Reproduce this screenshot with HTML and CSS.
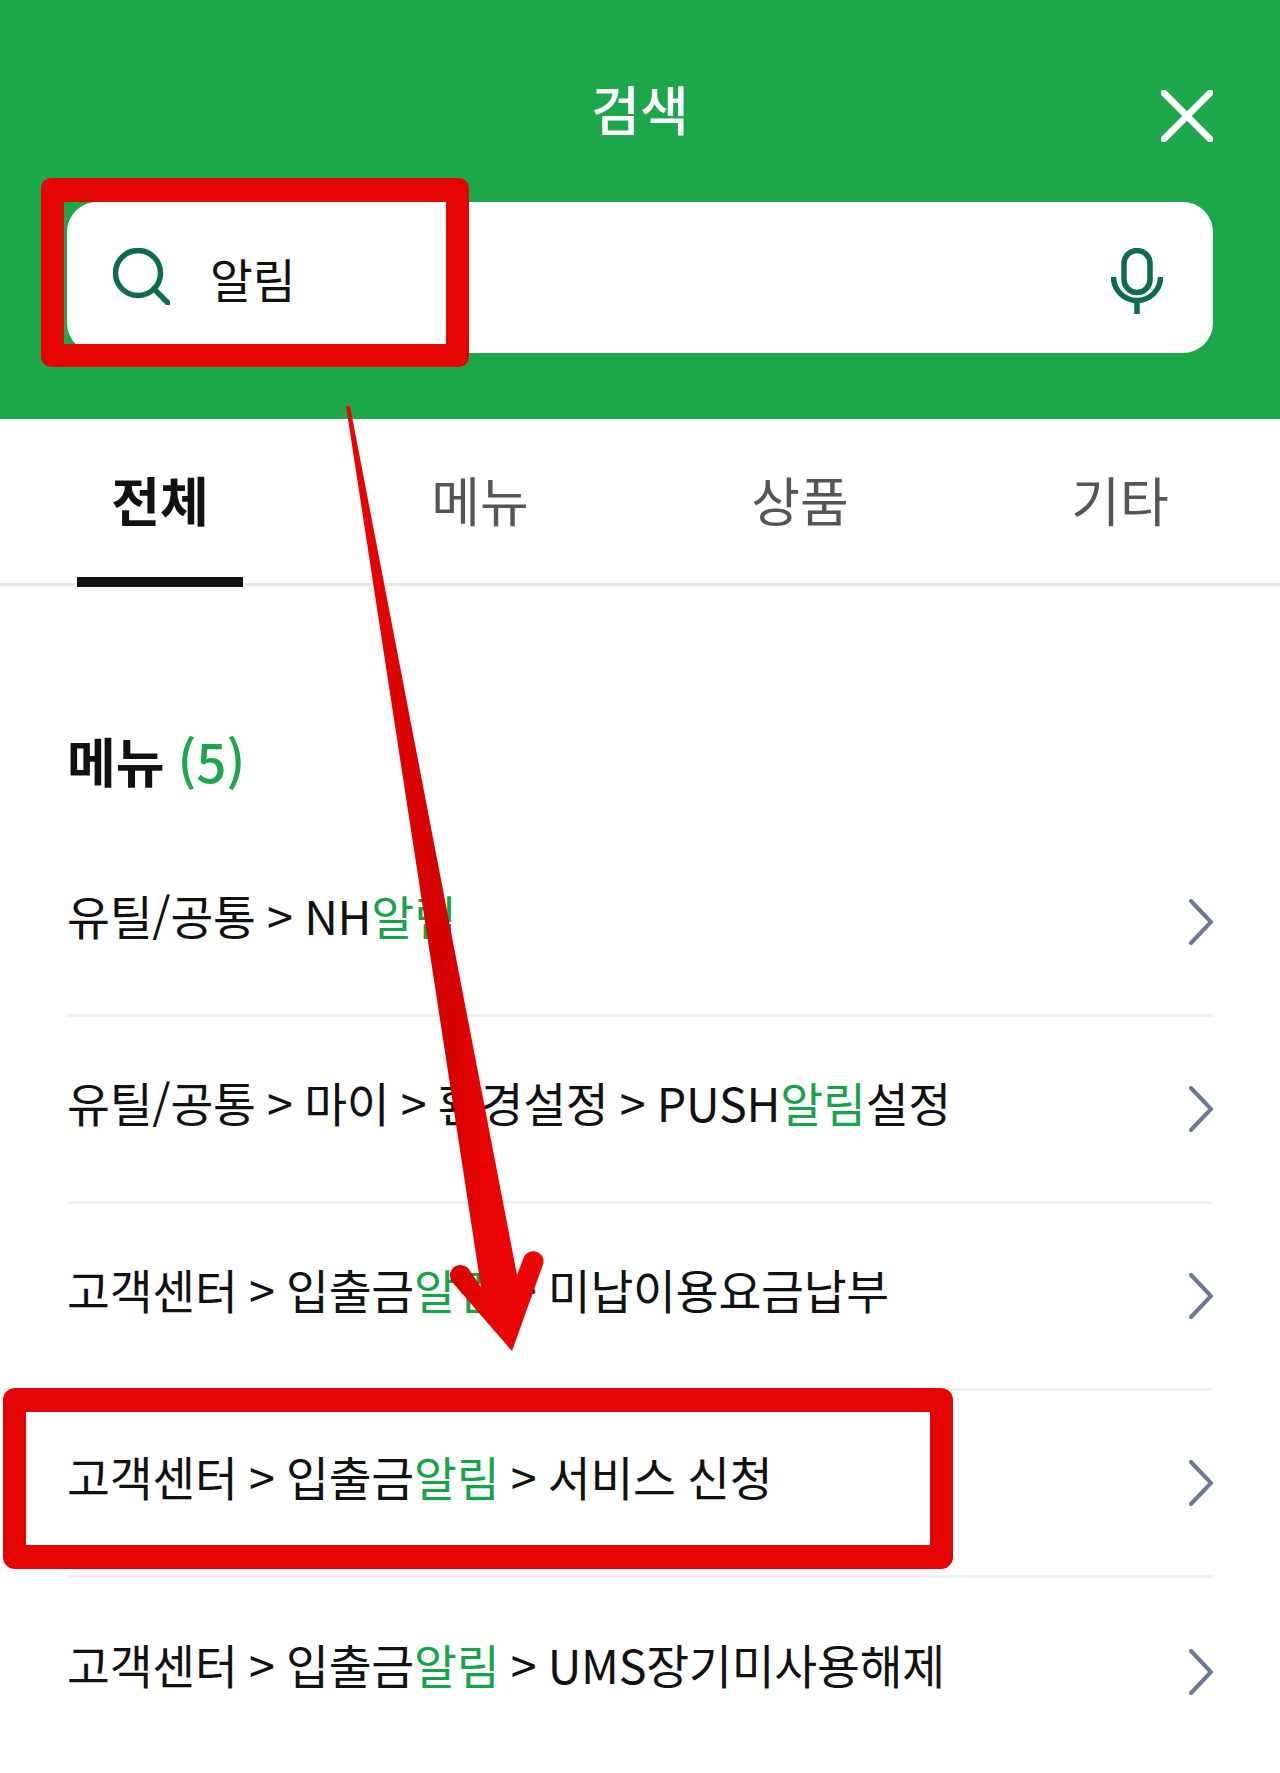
FILE: index.html
```html
<!DOCTYPE html>
<html lang="ko">
<head>
  <meta charset="UTF-8" />
  <meta name="viewport" content="width=device-width, initial-scale=1.0"/>
  <title>검색</title>
  <link rel="stylesheet" href="styles.css">
</head>
<body>
  <div class="page">
    <header class="topbar">
      <div class="title-row">
        <h1 class="title">검색</h1>
        <svg class="close" viewBox="0 0 54 54"><path d="M3 3 L51 51 M51 3 L3 51"/></svg>
      </div>
      <div class="search">
        <svg class="search-icon" viewBox="0 0 57 57"><circle cx="25" cy="25" r="22.5"/><path d="M41 41 L55 55"/></svg>
        <span class="search-text">알림</span>
        <svg class="mic-icon" viewBox="0 0 52 66"><rect x="13" y="2.5" width="26" height="42" rx="13"/><path d="M2.5 29 A23.5 23.5 0 0 0 49.5 29 M26 52 V66"/></svg>
      </div>
    </header>

    <nav class="tabs">
      <div class="tab active"><span>전체</span></div>
      <div class="tab"><span>메뉴</span></div>
      <div class="tab"><span>상품</span></div>
      <div class="tab"><span>기타</span></div>
    </nav>

    <h2 class="section">메뉴 <em>(5)</em></h2>

    <ul class="list">
      <li class="row"><span>유틸/공통 &gt; NH<b>알림</b></span><svg class="chevron" viewBox="0 0 24 46"><path d="M2 2 L22 23 L2 44"/></svg></li>
      <li class="row"><span>유틸/공통 &gt; 마이 &gt; 환경설정 &gt; PUSH<b>알림</b>설정</span><svg class="chevron" viewBox="0 0 24 46"><path d="M2 2 L22 23 L2 44"/></svg></li>
      <li class="row"><span>고객센터 &gt; 입출금<b>알림</b> &gt; 미납이용요금납부</span><svg class="chevron" viewBox="0 0 24 46"><path d="M2 2 L22 23 L2 44"/></svg></li>
      <li class="row"><span>고객센터 &gt; 입출금<b>알림</b> &gt; 서비스 신청</span><svg class="chevron" viewBox="0 0 24 46"><path d="M2 2 L22 23 L2 44"/></svg></li>
      <li class="row"><span>고객센터 &gt; 입출금<b>알림</b> &gt; UMS장기미사용해제</span><svg class="chevron" viewBox="0 0 24 46"><path d="M2 2 L22 23 L2 44"/></svg></li>
    </ul>

    <!-- annotations drawn over the screenshot -->
    <svg class="arrow" viewBox="0 0 1280 1773">
      <defs>
        <linearGradient id="arrowFill" x1="0" x2="1" y1="0" y2="0">
          <stop offset="0" stop-color="#e80404"/>
          <stop offset="0.5" stop-color="#d40202"/>
          <stop offset="0.7" stop-color="#e80404"/>
          <stop offset="1" stop-color="#ee0404"/>
        </linearGradient>
      </defs>
      <path fill="url(#arrowFill)" d="M346 406 L350 406 L517 1275 L524 1257 A10 10 0 0 1 542.5 1266 L512 1351 L453 1283 A10.5 10.5 0 0 1 468 1268 L481 1287 Z"/>
    </svg>
    <div class="mark mark-search"></div>
    <div class="mark mark-row"></div>
  </div>
</body>
</html>
```

FILE: styles.css
```css
* { box-sizing: border-box; margin: 0; padding: 0; }
body { background: #fff; font-family: "Noto Sans CJK KR", "Noto Sans", sans-serif; color: #111; }
.page { position: relative; width: 1280px; height: 1773px; overflow: hidden; background: #fff; }

.topbar { height: 419px; background: #1ba74a; padding: 78px 67px 0; }
.title-row { position: relative; height: 60px; display: flex; justify-content: center; align-items: center; }
.title { color: #fff; font-size: 53px; font-weight: 500; line-height: 60px; }
.close { position: absolute; right: 0; top: 12px; width: 52px; height: 52px; }
.close path { stroke: #fff; stroke-width: 7; stroke-linecap: round; fill: none; }

.search {
  display: flex; align-items: center;
  height: 151px; margin-top: 64px; padding: 0 50px 0 46px;
  background: #fff; border-radius: 30px;
}
.search-icon { width: 57px; height: 57px; margin-top: -2px; }
.search-icon circle, .search-icon path { stroke: #0e6b50; stroke-width: 5.5; fill: none; stroke-linecap: round; }
.search-text { margin-left: 40px; font-size: 46.5px; line-height: 60px; }
.mic-icon { width: 52px; height: 66px; margin-left: auto; margin-top: 6px; }
.mic-icon rect, .mic-icon path { stroke: #0e6b50; stroke-width: 5.5; fill: none; }

.tabs { display: grid; grid-template-columns: repeat(4, 320px); height: 167px; border-bottom: 3px solid #e8e8e8; }
.tab { display: flex; justify-content: center; color: #555; font-size: 53px; }
.tab span { width: 166px; height: 168px; line-height: 160px; text-align: center; }
.tab.active { color: #111; font-weight: 700; }
.tab.active span { border-bottom: 10px solid #111; }

.section { margin: 144px 67px 40px; font-size: 53px; font-weight: 700; line-height: 60px; word-spacing: -2px; }
.section em { font-style: normal; font-weight: 500; color: #1ba74a; }

.list { list-style: none; margin: 0 67px; }
.row {
  display: flex; align-items: center; justify-content: space-between;
  height: 187px; border-bottom: 3px solid #f1f1f1;
  font-size: 46.6px; letter-spacing: -0.2px; word-spacing: -1.5px;
}
.row:last-child { border-bottom: none; }
.row span { margin-bottom: 16px; }
.row b { font-weight: 400; color: #16a34a; }
.chevron { width: 24px; height: 46px; }
.chevron path { stroke: #6b7a90; stroke-width: 4; fill: none; stroke-linecap: round; }

.arrow { position: absolute; left: 0; top: 0; width: 1280px; height: 1773px; }
.mark { position: absolute; border-style: solid; border-color: #e40404; }
.mark-search { left: 41px; top: 178px; width: 428px; height: 189px; border-width: 24px 23px 23px 23px; border-radius: 10px; }
.mark-row { left: 3px; top: 1388px; width: 950px; height: 181px; border-width: 24px 23px 24px 23px; border-radius: 12px; }
```
